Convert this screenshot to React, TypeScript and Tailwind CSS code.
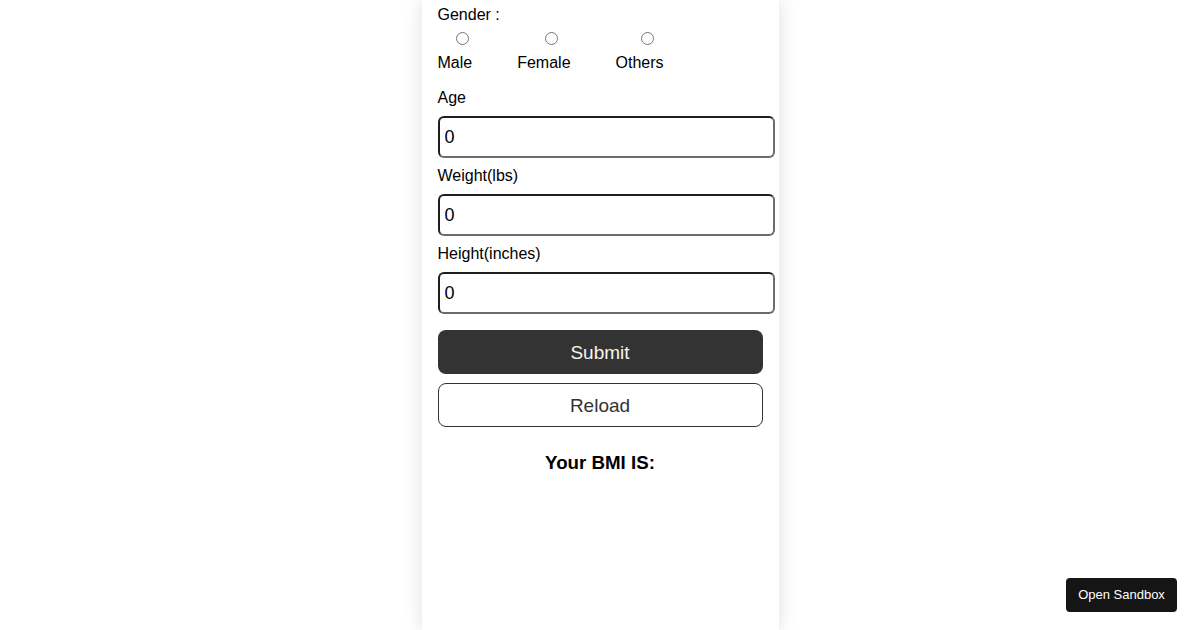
import React, { useState } from "react";

const font = { fontFamily: '"Liberation Sans", Arial, sans-serif' };

export default function App() {
  const [gender, setGender] = useState("");
  const [age, setAge] = useState("0");
  const [weight, setWeight] = useState("0");
  const [height, setHeight] = useState("0");
  const [bmi, setBmi] = useState("");

  const inputCls =
    "block w-[337px] h-[42px] rounded-[6px] border-2 border-t-[#1f1f1f] border-l-[#1f1f1f] border-b-[#6b6b6b] border-r-[#6b6b6b] bg-white px-[5px] text-[18px] text-black outline-none";

  const fields: [string, string, (v: string) => void][] = [
    ["Age", age, setAge],
    ["Weight(lbs)", weight, setWeight],
    ["Height(inches)", height, setHeight],
  ];

  return (
    <div className="relative min-h-screen w-full bg-white text-black" style={font}>
      <div className="mx-auto flex min-h-screen w-[357px] flex-col bg-white px-4 pt-[6px] shadow-[0_0_18px_rgba(0,0,0,0.13)]">
        <div className="text-[16px] leading-[18px]">Gender :</div>
        <div className="mt-[8px] flex gap-[45px]">
          {["Male", "Female", "Others"].map((g) => (
            <label key={g} className="flex flex-col items-center gap-[9px]">
              <input
                type="radio"
                name="gender"
                checked={gender === g}
                onChange={() => setGender(g)}
                className="m-0 ml-4 h-[13px] w-[13px]"
              />
              <span className="text-[16px] leading-[18px]">{g}</span>
            </label>
          ))}
        </div>
        <div className="mt-[17px] flex flex-col gap-[9px]">
          {fields.map(([label, val, set]) => (
            <React.Fragment key={label}>
              <div className="text-[16px] leading-[18px]">{label}</div>
              <input
                type="number"
                value={val}
                onChange={(e) => set(e.target.value)}
                className={inputCls}
              />
            </React.Fragment>
          ))}
        </div>
        <button
          className="mt-[16px] h-[44px] w-full rounded-lg bg-[#333333] pt-[2px] text-[19px] text-[#f5f5f5]"
          onClick={() => {
            const w = parseFloat(weight);
            const h = parseFloat(height);
            if (w > 0 && h > 0) setBmi(((w * 703) / (h * h)).toFixed(1));
          }}
        >
          Submit
        </button>
        <button
          className="mt-[9px] h-[44px] w-full rounded-lg border border-[#333333] bg-white pt-[2px] text-[19px] text-[#333333]"
          onClick={() => {
            setAge("0");
            setWeight("0");
            setHeight("0");
            setGender("");
            setBmi("");
          }}
        >
          Reload
        </button>
        <h3 className="mt-[25px] text-center text-[18.72px] font-bold leading-[21.5px]">
          Your BMI IS: {bmi}
        </h3>
      </div>
      <button className="fixed bottom-[18px] right-[23px] h-[34px] w-[111px] rounded-[4px] bg-[#151515] text-[13px] text-white">
        Open Sandbox
      </button>
    </div>
  );
}
